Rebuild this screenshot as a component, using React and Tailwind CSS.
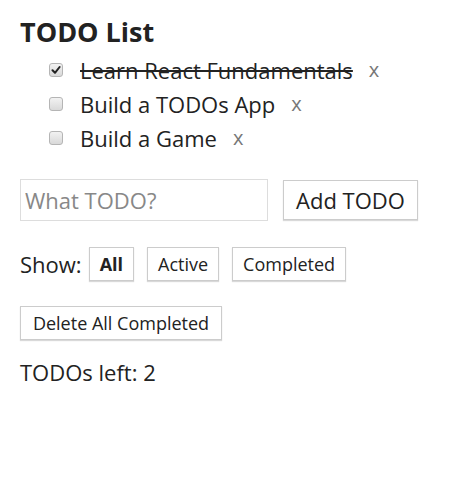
import { useState } from "react";

const INITIAL = [
  { id: 1, text: "Learn React Fundamentals", done: true },
  { id: 2, text: "Build a TODOs App", done: false },
  { id: 3, text: "Build a Game", done: false },
];

const FILTERS = ["All", "Active", "Completed"];

const Check = ({ on, onClick }) => (
  <span onClick={onClick}
    className="flex h-[14px] w-[14px] cursor-pointer items-center justify-center rounded-[3px] border border-[#b5b5b5] bg-gradient-to-b from-[#f2f2f2] to-[#d9d9d9]">
    {on && (
      <svg width={10} height={10} viewBox="0 0 10 10">
        <path d="M1.5 5.2 L4 7.8 L8.6 2" fill="none" stroke="#222" strokeWidth={2} strokeLinecap="round" strokeLinejoin="round" />
      </svg>
    )}
  </span>
);

export default function App() {
  const [todos, setTodos] = useState(INITIAL);
  const [draft, setDraft] = useState("");
  const [filter, setFilter] = useState("All");

  const shown = todos.filter(t =>
    filter === "All" ? true : filter === "Active" ? !t.done : t.done
  );
  const left = todos.filter(t => !t.done).length;

  const add = () => {
    if (!draft.trim()) return;
    setTodos([...todos, { id: Date.now(), text: draft.trim(), done: false }]);
    setDraft("");
  };

  return (
    <div className="min-h-[482px] bg-white px-5 pt-[14px] text-[#222]" style={{ fontFamily: '"Open Sans", "Noto Sans", sans-serif' }}>
      <h1 className="text-[27px] font-bold leading-[36px]">TODO List</h1>

      {/* list */}
      <ul className="mt-[3px] pl-[29px]">
        {shown.map(t => (
          <li key={t.id} className="flex h-[34px] items-center">
            <Check on={t.done}
              onClick={() => setTodos(todos.map(x => x.id === t.id ? { ...x, done: !x.done } : x))} />
            <span className={`ml-[17px] text-[22px] ${t.done ? "line-through" : ""}`}>{t.text}</span>
            <button onClick={() => setTodos(todos.filter(x => x.id !== t.id))}
              className="ml-[16px] text-[20px] text-[#777]">x</button>
          </li>
        ))}
      </ul>

      {/* new todo */}
      <div className="mt-[24px] flex items-center">
        <input value={draft} onChange={e => setDraft(e.target.value)}
          placeholder="What TODO?"
          className="h-[42px] w-[248px] border border-[#ddd] px-1 text-[22px] placeholder:text-[#888] outline-none" />
        <button onClick={add}
          className="ml-[15px] h-[40px] w-[135px] border border-[#ccc] bg-white text-[22px] shadow-[0_1px_1px_rgba(0,0,0,0.15)]">
          Add TODO
        </button>
      </div>

      {/* filters */}
      <div className="mt-[26px] flex items-center gap-[13px]">
        <span className="mr-[-6px] text-[22px]">Show:</span>
        {FILTERS.map(f => (
          <button key={f} onClick={() => setFilter(f)}
            className={`h-[34px] border border-[#ccc] bg-white px-[10px] text-[18px] shadow-[0_1px_1px_rgba(0,0,0,0.15)] ${filter === f ? "font-bold" : ""}`}>
            {f}
          </button>
        ))}
      </div>

      <button onClick={() => setTodos(todos.filter(t => !t.done))}
        className="mt-[25px] h-[34px] w-[202px] border border-[#ccc] bg-white text-[18px] shadow-[0_1px_1px_rgba(0,0,0,0.15)]">
        Delete All Completed
      </button>

      <p className="mt-[16px] text-[22px]">TODOs left: {left}</p>
    </div>
  );
}
